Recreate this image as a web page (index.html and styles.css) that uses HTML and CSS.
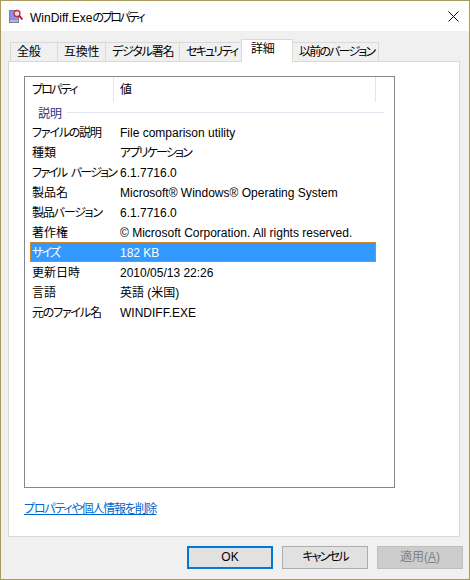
FILE: index.html
```html
<!DOCTYPE html>
<html lang="ja">
<head>
<meta charset="utf-8">
<title>WinDiff.Exeのプロパティ</title>
<link rel="stylesheet" href="styles.css">
</head>
<body>
<div class="window">
  <div class="titlebar">
    <svg class="app-icon" width="14" height="16" viewBox="0 0 14 16">
      <rect x="0.5" y="2.5" width="9" height="12" fill="#8c8cf0" stroke="#7a7a9a"/>
      <rect x="1" y="12" width="8" height="2" fill="#b8b8c8"/>
      <circle cx="8" cy="5.5" r="3" fill="#f4d8e4" stroke="#c0283c" stroke-width="1.3"/>
      <line x1="10.2" y1="7.8" x2="13.5" y2="11.5" stroke="#a01828" stroke-width="1.8"/>
    </svg>
    <span class="title">WinDiff.Exe<span class="title-kana">のプロパティ</span></span>
    <svg class="close" width="11" height="11" viewBox="0 0 11 11">
      <path d="M0.5 0.5 L10.5 10.5 M10.5 0.5 L0.5 10.5" stroke="#000" stroke-width="1" fill="none"/>
    </svg>
  </div>
  <div class="content">
    <div class="tabs">
      <div class="tab t1 kanji">全般</div>
      <div class="tab t2 kanji">互換性</div>
      <div class="tab t3 mixed">デジタル署名</div>
      <div class="tab t4 kana">セキュリティ</div>
      <div class="tab t5 active kanji">詳細</div>
      <div class="tab t6 kana">以前のバージョン</div>
    </div>
    <div class="panel">
      <div class="listview">
        <div class="lv-header">
          <div class="hcol1 kana">プロパティ</div>
          <div class="hcol2">値</div>
        </div>
        <div class="group"><span>説明</span><div class="group-line"></div></div>
        <div class="row"><span class="k mixed">ファイルの説明</span><span class="v">File comparison utility</span></div>
        <div class="row"><span class="k">種類</span><span class="v kana">アプリケーション</span></div>
        <div class="row"><span class="k kana spaced">ファイル バージョン</span><span class="v">6.1.7716.0</span></div>
        <div class="row"><span class="k">製品名</span><span class="v">Microsoft® Windows® Operating System</span></div>
        <div class="row"><span class="k mixed">製品バージョン</span><span class="v">6.1.7716.0</span></div>
        <div class="row"><span class="k">著作権</span><span class="v">© Microsoft Corporation. All rights reserved.</span></div>
        <div class="row sel"><span class="k kana">サイズ</span><span class="v">182 KB</span></div>
        <div class="row"><span class="k">更新日時</span><span class="v">2010/05/13 22:26</span></div>
        <div class="row"><span class="k">言語</span><span class="v">英語 (米国)</span></div>
        <div class="row"><span class="k mixed">元のファイル名</span><span class="v">WINDIFF.EXE</span></div>
      </div>
      <a class="link mixed" href="#">プロパティや個人情報を削除</a>
    </div>
    <div class="buttons">
      <button class="btn default">OK</button>
      <button class="btn kana">キャンセル</button>
      <button class="btn disabled">適用(<u>A</u>)</button>
    </div>
  </div>
</div>
</body>
</html>
```

FILE: styles.css
```css
* { box-sizing: border-box; }

body {
  margin: 0;
  font-family: "Liberation Sans", "Noto Sans CJK JP", sans-serif;
  font-size: 12px;
  font-feature-settings: "palt";
  color: #000;
}

/* Japanese glyphs of the original UI font are narrower than Noto Sans CJK */
.kana { letter-spacing: -1.8px; }
.mixed { letter-spacing: -1.2px; }
.kanji { letter-spacing: -0.3px; }
.spaced { word-spacing: 3px; }
.title-kana { letter-spacing: -2.4px; }

.window {
  width: 470px;
  height: 580px;
  border: 1px solid #ab9a5e;
  background: #f0f0f0;
  display: flex;
  flex-direction: column;
  overflow: hidden;
}

.titlebar {
  flex: none;
  height: 30px;
  background: #fff;
  display: flex;
  align-items: center;
  padding-left: 8px;
}

.app-icon { flex: none; margin-right: 7px; }
.title { flex: 1; }
.close { flex: none; margin-right: 10px; }

.content {
  flex: 1;
  padding: 8px 6px 0 7px;
  display: flex;
  flex-direction: column;
}

.tabs {
  display: flex;
  align-items: flex-end;
  height: 22px;
  margin-left: 2px;
}

.tab {
  height: 19px;
  border: 1px solid #d9d9d9;
  border-bottom: none;
  background: #f0f0f0;
  padding-left: 6px;
  line-height: 19px;
  white-space: nowrap;
  overflow: hidden;
  margin-left: -1px;
}
.tab.t1 { margin-left: 0; width: 48px; }
.tab.t2 { width: 49px; }
.tab.t3 { width: 75px; }
.tab.t4 { width: 63px; }
.tab.t5 { width: 52px; }
.tab.t6 { width: 87px; }

.tab.active {
  height: 23px;
  background: #fff;
  margin-bottom: -1px;
  position: relative;
  z-index: 1;
  padding-left: 9px;
}

.panel {
  height: 476px;
  margin-right: 3px;
  background: #fff;
  border: 1px solid #d9d9d9;
  padding: 14px 0 0 15px;
}

.listview {
  width: 371px;
  height: 412px;
  border: 1px solid #828790;
}

.lv-header {
  display: flex;
  height: 25px;
  line-height: 27px;
}
.hcol1 {
  width: 89px;
  padding-left: 7px;
  border-right: 1px solid #e5e5e5;
}
.hcol2 {
  width: 262px;
  padding-left: 6px;
  border-right: 1px solid #e5e5e5;
}

.group {
  display: flex;
  align-items: center;
  height: 20px;
  padding-left: 13px;
  color: #1e3287;
}
.group-line {
  width: 317px;
  height: 1px;
  margin-left: 5px;
  background: #e2e6f0;
}

.row {
  display: flex;
  height: 20px;
  line-height: 22px;
  width: 346px;
  margin-left: 5px;
  padding-left: 2px;
  white-space: nowrap;
}
.row .k { width: 88px; flex: none; }
.row.sel {
  background: #3399ff;
  color: #fff;
  box-shadow: inset 0 0 0 1px #d2862c;
}

.link {
  display: inline-block;
  margin-top: 13px;
  line-height: 16px;
  color: #0066cc;
  text-decoration: underline;
}

.buttons {
  display: flex;
  justify-content: flex-end;
  gap: 9px;
  margin-top: 9px;
}

.btn {
  width: 86px;
  height: 23px;
  margin: 0;
  padding: 0;
  border: 1px solid #adadad;
  background: #e1e1e1;
  font: inherit;
  color: #000;
  text-align: center;
  line-height: 21px;
}
.btn.default {
  border: 2px solid #0078d7;
  line-height: 19px;
}
.btn.disabled {
  background: #cccccc;
  border-color: #bfbfbf;
  color: #838383;
}
```
